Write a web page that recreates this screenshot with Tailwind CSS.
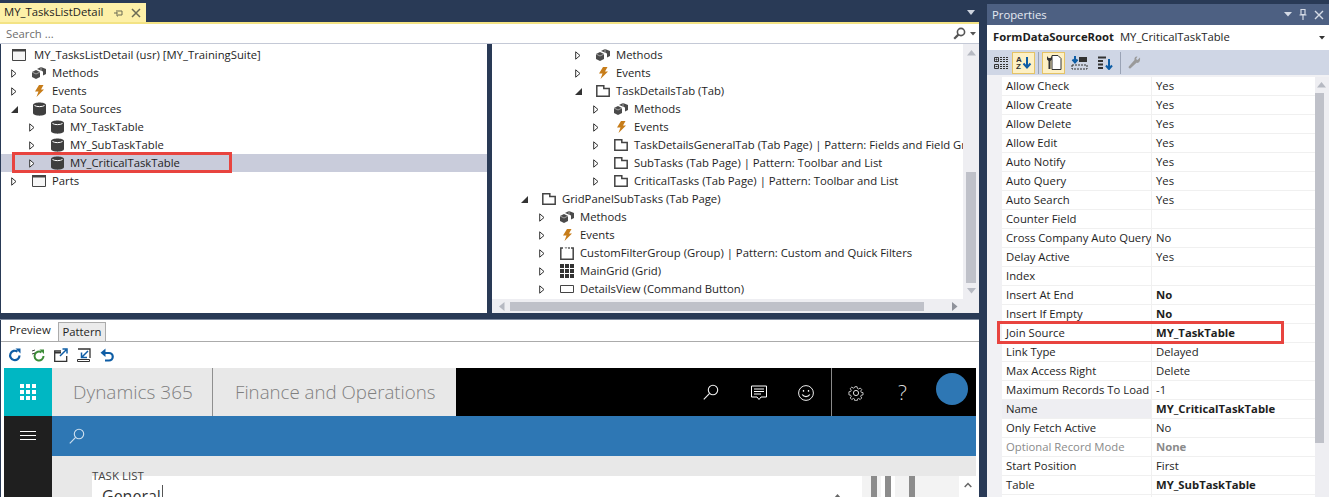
<!DOCTYPE html>
<html lang="en">
<head>
  <meta charset="UTF-8" />
  <title>MY_TasksListDetail</title>
  <script src="https://cdn.jsdelivr.net/npm/@tailwindcss/browser@4"></script>
</head>
<body class="m-0 h-[497px] w-[1329px] overflow-hidden bg-[#293a56] font-['Open_Sans',sans-serif] text-[11.3px] text-[#1e1e1e]">
  <div class="relative flex h-[497px] w-[1329px]">

    <!-- editor column -->
    <div class="flex h-full w-[979px] flex-col">
      <div class="flex h-[22px] items-end justify-between">
        <div class="flex h-[19px] w-[146px] items-center bg-[#fdf0a8] pl-[4px] text-[#1e1e1e]">
          <span>MY_TasksListDetail</span>
          <svg class="ml-[10px]" width="10" height="10" viewBox="0 0 10 10"><path d="M1 5h3M4 2v6h1M5 3h4v4H5" fill="none" stroke="#6b6b55"/></svg>
          <svg class="ml-[8px]" width="10" height="10" viewBox="0 0 10 10"><path d="M1 1l8 8M9 1l-8 8" stroke="#6b6b55" stroke-width="1.5"/></svg>
        </div>
        <svg class="mb-[6px] mr-[3px]" width="9" height="6" viewBox="0 0 9 6"><path d="M0 0h8L4 5z" fill="#ced4df"/></svg>
      </div>
      <div class="h-[2px] bg-[#f3e384]"></div>
      <div class="flex h-[20px] items-center justify-between border-b border-[#c4c9d6] bg-white pl-[6px] pr-[3px] text-[#6d6d6d]">
        <span class="pt-[2px]">Search ...</span>
        <span class="flex items-center gap-[4px]">
          <svg width="13" height="13" viewBox="0 0 13 13"><circle cx="8" cy="5" r="3.6" fill="none" stroke="#555" stroke-width="1.6"/><path d="M5.4 7.6L1.2 11.8" stroke="#555" stroke-width="2.2"/></svg>
          <svg width="6" height="4" viewBox="0 0 6 4"><path d="M0 0h6L3 3.5z" fill="#555"/></svg>
        </span>
      </div>

      <div class="flex h-[269px] bg-[#293a56]">
        <div id="left-tree" class="ml-[1px] h-full w-[486px] bg-white pt-[2px]"></div>
        <div class="ml-[5px] flex h-full w-[487px] flex-col bg-white">
          <div class="flex h-[255px]">
            <div id="right-tree" class="h-full w-[471px] overflow-hidden pt-[2px]"></div>
            <div class="relative h-full w-[16px] bg-[#eeeef2]">
              <svg class="absolute left-[4px] top-[6px]" width="9" height="6" viewBox="0 0 9 6"><path d="M4.5 0L9 5.5H0z" fill="#b6b9c2"/></svg>
              <div class="absolute left-[3px] top-[128px] h-[111px] w-[10px] bg-[#bfc1c9]"></div>
              <svg class="absolute left-[4px] top-[244px]" width="9" height="6" viewBox="0 0 9 6"><path d="M0 0h9L4.5 5.5z" fill="#b6b9c2"/></svg>
            </div>
          </div>
          <div class="relative h-[14px] bg-[#eeeef2]">
            <svg class="absolute left-[7px] top-[3px]" width="6" height="9" viewBox="0 0 6 9"><path d="M5.5 0v9L0 4.5z" fill="#b6b9c2"/></svg>
            <div class="absolute left-[18px] top-[3px] h-[9px] w-[414px] bg-[#bfc1c9]"></div>
            <svg class="absolute left-[460px] top-[3px]" width="6" height="9" viewBox="0 0 6 9"><path d="M0 0v9l5.5-4.5z" fill="#8f929b"/></svg>
          </div>
        </div>
      </div>

      <div class="h-[2px] bg-[#293a56]"></div>
      <div class="h-[5px] border-b border-[#7f8ba0] bg-[#293a56]"></div>

      <!-- preview -->
      <div class="ml-[1px] flex flex-1 flex-col overflow-hidden bg-white">
        <div class="flex h-[22px] items-end border-b border-[#ababab] pl-[1px]">
          <div class="flex h-[22px] w-[56px] items-center justify-center bg-white">Preview</div>
          <div class="flex h-[19px] w-[48px] items-center justify-center border border-b-0 border-[#ababab] bg-[#ebebeb]">Pattern</div>
        </div>
        <div class="flex h-[26px] items-center gap-[9px] pl-[7px]">
          <svg width="14" height="15" viewBox="0 0 14 15"><path d="M11.5 7.5a4.7 4.7 0 1 1-2-3.9" fill="none" stroke="#0e5da5" stroke-width="2.2"/><path d="M7.5 0.5h5v5z" fill="#0e5da5"/></svg>
          <svg width="14" height="15" viewBox="0 0 14 15"><path d="M12.5 8a4.5 4.5 0 1 1-2-3.7" fill="none" stroke="#3c8c37" stroke-width="2"/><path d="M8.5 1.5h4.5v4.5z" fill="#3c8c37"/><path d="M1 3l3-1M1 6l3-1" stroke="#444"/></svg>
          <svg width="14" height="14" viewBox="0 0 14 14"><path d="M7 3H0.7v10.3h12V8" fill="none" stroke="#333" stroke-width="1.3"/><path d="M1 4h6v1.5H1z" fill="#333"/><path d="M6 8l6-6M8.5 1H13v4.5" fill="none" stroke="#0e5da5" stroke-width="1.5"/></svg>
          <svg width="14" height="14" viewBox="0 0 14 14"><path d="M1 1h12v9" fill="none" stroke="#333" stroke-width="1.3"/><path d="M0.5 11.5h12v2h-12z" fill="none" stroke="#333"/><path d="M11 3l-6 6M4.5 4.5V9.5H10" fill="none" stroke="#0e5da5" stroke-width="1.5"/></svg>
          <svg width="14" height="15" viewBox="0 0 14 15"><path d="M3 5h6a3.6 3.6 0 0 1 0 7.5H5" fill="none" stroke="#0e5da5" stroke-width="2.2"/><path d="M5.5 0.5v8.5L0.5 4.8z" fill="#0e5da5"/></svg>
        </div>

        <div class="ml-[3px] flex w-[972px] flex-1 flex-col bg-[#e8e8e8]">
          <div class="flex h-[48px]">
            <div class="grid h-full w-[48px] place-items-center bg-[#00b7c3]">
              <svg width="16" height="16" viewBox="0 0 16 16" fill="#fff"><path d="M0 0h4v4H0zM6 0h4v4H6zM12 0h4v4h-4zM0 6h4v4H0zM6 6h4v4H6zM12 6h4v4h-4zM0 12h4v4H0zM6 12h4v4H6zM12 12h4v4h-4z"/></svg>
            </div>
            <div class="flex h-full w-[161px] items-center border-r border-[#8f8f8f] pl-[21px] text-[19px] font-light text-[#7f7f7f]">Dynamics 365</div>
            <div class="flex h-full w-[243px] items-center pl-[22px] text-[18.7px] font-light text-[#7f7f7f]">Finance and Operations</div>
            <div class="relative h-full flex-1 bg-black">
              <svg class="absolute left-[247px] top-[16px]" width="16" height="16" viewBox="0 0 16 16"><circle cx="10" cy="6" r="4.7" fill="none" stroke="#eee" stroke-width="1.1"/><path d="M6.6 9.4L0.8 15.4" stroke="#eee" stroke-width="1.1"/></svg>
              <svg class="absolute left-[295px] top-[17px]" width="16" height="16" viewBox="0 0 16 16"><path d="M0.5 1h15v11H10l-2 2.5L6 12H0.5z" fill="none" stroke="#fff"/><path d="M3 4h10M3 6.5h10M3 9h7" stroke="#fff"/></svg>
              <svg class="absolute left-[342px] top-[17px]" width="16" height="16" viewBox="0 0 16 16" fill="none" stroke="#eee"><circle cx="8" cy="8" r="7.4"/><path d="M4.2 9.5c1.8 2.8 5.8 2.8 7.6 0" stroke-width="1.2"/><path d="M5.5 5v1.8M10.5 5v1.8" stroke-width="1.3"/></svg>
              <div class="absolute left-[375px] top-0 h-full w-px bg-[#8a8a8a]"></div>
              <svg class="absolute left-[392px] top-[17px]" width="16" height="16" viewBox="0 0 16 16" fill="none" stroke="#ddd"><circle cx="8" cy="8" r="2.6"/><path d="M6.7 0.7h2.6l.4 2.1 1.4.6 1.8-1.2 1.8 1.8-1.2 1.8.6 1.4 2.1.4v2.6l-2.1.4-.6 1.4 1.2 1.8-1.8 1.8-1.8-1.2-1.4.6-.4 2.1H6.7l-.4-2.1-1.4-.6-1.8 1.2-1.8-1.8 1.2-1.8-.6-1.4-2.1-.4V6.6l2.1-.4.6-1.4-1.2-1.8 1.8-1.8 1.8 1.2 1.4-.6z" transform="translate(1.1 1.1) scale(.86)"/></svg>
              <span class="absolute left-[442px] top-[9px] text-[21px] font-light leading-[30px] text-[#ddd]">?</span>
              <div class="absolute left-[480px] top-[5px] h-[32px] w-[32px] rounded-full bg-[#2e77b4]"></div>
            </div>
          </div>
          <div class="flex h-[40px]">
            <div class="grid h-full w-[48px] place-items-center bg-[#1f1f1f]">
              <svg width="16" height="10" viewBox="0 0 16 10"><path d="M0 .5h16M0 4.5h16M0 8.5h16" stroke="#fff"/></svg>
            </div>
            <div class="flex flex-1 items-center bg-[#2e77b4] pl-[17px]">
              <svg width="16" height="16" viewBox="0 0 16 16"><circle cx="10" cy="6" r="4.7" fill="none" stroke="#cfe0ef" stroke-width="1.1"/><path d="M6.6 9.4L0.8 15.4" stroke="#cfe0ef" stroke-width="1.1"/></svg>
            </div>
          </div>
          <div class="flex flex-1">
            <div class="h-full w-[48px] bg-[#1f1f1f]"></div>
            <div class="relative flex-1 overflow-hidden">
              <div class="absolute left-[40px] top-[20px] h-[40px] w-[770px] bg-white pl-[10px] pt-[8px] text-[16px] leading-[24px] text-[#333]">
                <span class="border-r border-[#555] pr-px">General</span>
                <svg class="absolute left-[742px] top-[18px]" width="7" height="4" viewBox="0 0 7 4"><path d="M3.500 0L7 4H0z" fill="#666"/></svg>
              </div>
              <div class="absolute left-[40px] top-[13px] text-[11.5px] leading-[14px] text-[#444]">TASK LIST</div>
              <div class="absolute left-[810px] top-[20px] flex h-[30px] w-[114px] bg-[#f3f3f3]">
                <div class="ml-[9px] h-full w-[6px] bg-[#8c8c8c]"></div>
                <div class="ml-[4px] h-full w-[14px] bg-white px-[4px]"><div class="h-full w-[6px] bg-[#8c8c8c]"></div></div>
                <div class="ml-[14px] h-full w-[6px] bg-[#8c8c8c]"></div>
                <div class="ml-[44px] grid h-full w-[17px] justify-center bg-white pt-[6px]">
                  <svg width="8" height="6" viewBox="0 0 8 6"><path d="M.7 5l3.3-3.5L7.3 5" fill="none" stroke="#666" stroke-width="1.5"/></svg>
                </div>
              </div>
            </div>
          </div>
        </div>
      </div>
    </div>

    <!-- properties -->
    <div class="ml-[8px] mt-[4px] flex h-[493px] w-[342px] flex-col">
      <div class="flex h-[21px] items-center justify-between bg-[#4d6082] pl-[5px] pr-[5px] text-[#e6eaf2]">
        <span class="pt-[2px]">Properties</span>
        <span class="flex items-center gap-[7px]">
          <svg width="8" height="5" viewBox="0 0 8 5"><path d="M0 0h8L4 4.5z" fill="#d5dbe6"/></svg>
          <svg width="8" height="11" viewBox="0 0 8 11"><path d="M2 .5h4v5H2zM.5 6h7M4 6v5" fill="none" stroke="#d5dbe6" stroke-width="1.2"/></svg>
          <svg width="10" height="10" viewBox="0 0 10 10"><path d="M1 1l8 8M9 1l-8 8" stroke="#d5dbe6" stroke-width="1.4"/></svg>
        </span>
      </div>
      <div class="flex h-[25px] items-center justify-between bg-white pl-[6px] pr-[4px]">
        <span><b class="font-bold">FormDataSourceRoot</b><span class="ml-[6px]">MY_CriticalTaskTable</span></span>
        <svg width="6" height="4" viewBox="0 0 6 4"><path d="M0 0h6L3 3.5z" fill="#333"/></svg>
      </div>
      <div class="flex h-[25px] items-center bg-[#cfd6e5] pl-[3px]">
        <div class="grid h-[22px] w-[22px] place-items-center">
          <svg width="15" height="14" viewBox="0 0 15 14" fill="none" stroke="#333"><path d="M.5 1.5h4v4h-4zM.5 8.5h4v4h-4zM2.500 2.500v2M1.500 3.500h2M1.500 10.500h2"/><path d="M6 1.500h8M6 3.500h8M6 5.500h8M6 8.500h8M6 10.500h8M6 12.500h8" stroke-dasharray="2 1"/></svg>
        </div>
        <div class="grid h-[22px] w-[23px] place-items-center border border-[#e5c365] bg-[#fdf0c4]">
          <svg width="16" height="15" viewBox="0 0 16 15"><text x="0" y="7" font-size="8" font-weight="700" fill="#333" font-family="Liberation Sans">A</text><text x="0" y="14" font-size="8" font-weight="700" fill="#333" font-family="Liberation Sans">Z</text><path d="M11 2v10M7.500 8.500l3.500 4 3.500-4" fill="none" stroke="#0e5da5" stroke-width="2"/></svg>
        </div>
        <div class="mx-[3px] h-[22px] w-px bg-[#9aa3b5]"></div>
        <div class="grid h-[22px] w-[23px] place-items-center border border-[#e5c365] bg-[#fdf0c4]">
          <svg width="16" height="15" viewBox="0 0 16 15"><path d="M6 .5h6l3 3v11H6z" fill="#fff" stroke="#333"/><path d="M1 1v3.500l1.500 1.500v8h2V6L6 4.500V1L4.500 3h-2z" fill="#333"/></svg>
        </div>
        <div class="ml-[3px] grid h-[22px] w-[23px] place-items-center">
          <svg width="17" height="14" viewBox="0 0 17 14"><path d="M4 0v6M1.500 3.500L4 6.500l2.500-3" fill="none" stroke="#0e5da5" stroke-width="2"/><path d="M8 1h8v5H8z" fill="#333"/><path d="M1 9h15v4H1z" fill="none" stroke="#333" stroke-dasharray="2 1"/></svg>
        </div>
        <div class="ml-[2px] grid h-[22px] w-[23px] place-items-center">
          <svg width="16" height="14" viewBox="0 0 16 14"><path d="M1 1.500h8M1 5h5M1 8.500h5M1 12h5" stroke="#333" stroke-width="2"/><path d="M12 3v10M9 9.500l3 3.500 3-3.500" fill="none" stroke="#0e5da5" stroke-width="2"/></svg>
        </div>
        <div class="mx-[4px] h-[22px] w-px bg-[#9aa3b5]"></div>
        <svg class="ml-[3px]" width="13" height="14" viewBox="0 0 13 14"><path d="M12 1.500L9.500 4l-1.500-1 1.500-2.500C7.500 0 6 1.800 6.500 4L.8 10.500c-.8 1 .7 2.700 1.800 1.800L8.500 6.800c2.300.5 4-1 3.500-5.300z" fill="#9a9a9a"/></svg>
      </div>
      <div class="h-[2px] bg-[#f1f1f4]"></div>
      <div class="flex flex-1 overflow-hidden">
        <div class="w-[15px] bg-[#f1f1f4]"></div>
        <div id="props" class="w-[313px] bg-white"></div>
        <div class="relative w-[14px] bg-[#eeeef2]">
          <svg class="absolute left-[2px] top-[5px]" width="9" height="6" viewBox="0 0 9 6"><path d="M4.500 0L9 5.500H0z" fill="#b6b9c2"/></svg>
          <div class="absolute left-0 top-[16px] h-[350px] w-[9px] bg-[#bfc1c9]"></div>
        </div>
      </div>
    </div>

    <!-- annotations drawn on the screenshot -->
    <div class="pointer-events-none absolute left-[12px] top-[152px] h-[21px] w-[220px] border-[3px] border-[#e8443f]"></div>
    <div class="pointer-events-none absolute left-[997px] top-[321px] h-[23px] w-[287px] border-[3px] border-[#e8443f]"></div>
  </div>

  <script>
    const icons = {
      methods: '<svg width="15" height="14" viewBox="0 0 15 14"><path d="M0 6l4-2 4 2v5l-4 2-4-2zM5 3l4-2 5 2v5l-3 1.500V5.500L7 3.800z" fill="#4a4a4a"/><path d="M0 6l4 2 4-2M9 1v4" fill="none" stroke="#bbb" stroke-width=".8"/></svg>',
      events: '<svg width="9" height="12" viewBox="0 0 9 12"><path d="M4 0h4.500L6 4.500h3L1.500 12 3.500 6.500H0z" fill="#c77d1a"/></svg>',
      db: '<svg width="13" height="14" viewBox="0 0 13 14"><path d="M0 3c0-3.500 13-3.500 13 0v8c0 3.500-13 3.500-13 0z" fill="#3f3f3f"/><path d="M1.500 3.500c2 1.500 8 1.500 10 0" fill="none" stroke="#fff"/></svg>',
      form: '<svg width="14" height="12" viewBox="0 0 14 12"><path d="M.5.500h13v11H.5z" fill="#f6f6f6" stroke="#444"/><path d="M0 0h14v2.500H0z" fill="#444"/></svg>',
      tab: '<svg width="14" height="12" viewBox="0 0 14 12"><path d="M.8.800h7v2.800h5.400v7.600H.8z" fill="#fff" stroke="#444" stroke-width="1.500"/></svg>',
      group: '<svg width="14" height="14" viewBox="0 0 14 14"><path d="M3 2H.8v11.200h12.400V2H11" fill="#fff" stroke="#444" stroke-width="1.500"/><path d="M5 1l1 1.500L7 1M8 1l2 2M10 1L8 3" fill="none" stroke="#555" stroke-width=".7"/></svg>',
      grid: '<svg width="14" height="14" viewBox="0 0 14 14" fill="#333"><path d="M0 0h4v4H0zM5 0h4v4H5zM10 0h4v4h-4zM0 5h4v4H0zM5 5h4v4H5zM10 5h4v4h-4zM0 10h4v4H0zM5 10h4v4H5zM10 10h4v4h-4z"/></svg>',
      button: '<svg width="14" height="8" viewBox="0 0 14 8"><path d="M.5.500h13v7H.5z" fill="#fff" stroke="#444"/></svg>'
    };

    const open = '<svg width="7" height="7" viewBox="0 0 7 7"><path d="M7 0v7H0z" fill="#333"/></svg>';
    const closed = '<svg width="6" height="9" viewBox="0 0 6 9"><path d="M.7.800v7.400L5 4.500z" fill="#fff" stroke="#333"/></svg>';

    // [left padding, arrow, icon, text, selected, root]
    const leftRows = [
      [4, '', 'form', 'MY_TasksListDetail (usr) [MY_TrainingSuite]', false, true],
      [4, 'c', 'methods', 'Methods'],
      [4, 'c', 'events', 'Events'],
      [4, 'o', 'db', 'Data Sources'],
      [22, 'c', 'db', 'MY_TaskTable'],
      [22, 'c', 'db', 'MY_SubTaskTable'],
      [22, 'c', 'db', 'MY_CriticalTaskTable', true],
      [4, 'c', 'form', 'Parts']
    ];
    const rightRows = [
      [77, 'c', 'methods', 'Methods'],
      [77, 'c', 'events', 'Events'],
      [77, 'o', 'tab', 'TaskDetailsTab (Tab)'],
      [95, 'c', 'methods', 'Methods'],
      [95, 'c', 'events', 'Events'],
      [95, 'c', 'tab', 'TaskDetailsGeneralTab (Tab Page) | Pattern: Fields and Field Groups'],
      [95, 'c', 'tab', 'SubTasks (Tab Page) | Pattern: Toolbar and List'],
      [95, 'c', 'tab', 'CriticalTasks (Tab Page) | Pattern: Toolbar and List'],
      [23, 'o', 'tab', 'GridPanelSubTasks (Tab Page)'],
      [41, 'c', 'methods', 'Methods'],
      [41, 'c', 'events', 'Events'],
      [41, 'c', 'group', 'CustomFilterGroup (Group) | Pattern: Custom and Quick Filters'],
      [41, 'c', 'grid', 'MainGrid (Grid)'],
      [41, 'c', 'button', 'DetailsView (Command Button)']
    ];

    function treeRow([pad, arrow, icon, text, selected, root]) {
      const arrowSvg = arrow === 'o' ? open : arrow === 'c' ? closed : '';
      return `
        <div class="flex h-[18px] items-center whitespace-nowrap ${selected ? 'bg-[#c9ccdb]' : ''}" style="padding-left:${pad}px">
          ${root ? '' : `<span class="grid w-[18px] shrink-0 place-items-center">${arrowSvg}</span>`}
          <span class="grid shrink-0 ${root ? 'w-[29px] pr-[1px]' : 'w-[29px] pl-[3px]'} place-items-center">${icons[icon]}</span>
          <span class="shrink-0">${text}</span>
        </div>`;
    }

    document.getElementById('left-tree').innerHTML = leftRows.map(treeRow).join('');
    document.getElementById('right-tree').innerHTML = rightRows.map(treeRow).join('');

    // [name, value, style]  b = changed (bold), g = greyed out
    const props = [
      ['Allow Check', 'Yes'], ['Allow Create', 'Yes'], ['Allow Delete', 'Yes'], ['Allow Edit', 'Yes'],
      ['Auto Notify', 'Yes'], ['Auto Query', 'Yes'], ['Auto Search', 'Yes'], ['Counter Field', ''],
      ['Cross Company Auto Query', 'No'], ['Delay Active', 'Yes'], ['Index', ''],
      ['Insert At End', 'No', 'b'], ['Insert If Empty', 'No', 'b'], ['Join Source', 'MY_TaskTable', 'b'],
      ['Link Type', 'Delayed'], ['Max Access Right', 'Delete'], ['Maximum Records To Load', '-1'],
      ['Name', 'MY_CriticalTaskTable', 'b', true], ['Only Fetch Active', 'No'],
      ['Optional Record Mode', 'None', 'g'], ['Start Position', 'First'], ['Table', 'MY_SubTaskTable', 'b'], ['', '']
    ];

    document.getElementById('props').innerHTML = props.map(([name, value, kind, current]) => `
      <div class="flex h-[19px] items-center border-b border-[#f0f0f0] whitespace-nowrap">
        <div class="flex h-full w-[150px] items-center overflow-hidden border-r border-[#f0f0f0] pl-[4px] ${current ? 'bg-[#eeeef2]' : ''} ${kind === 'g' ? 'text-[#8a8a8a]' : ''}">${name}</div>
        <div class="pl-[4px] ${kind === 'b' ? 'font-bold' : ''} ${kind === 'g' ? 'font-bold text-[#8a8a8a]' : ''}">${value}</div>
      </div>`).join('');
  </script>
</body>
</html>
